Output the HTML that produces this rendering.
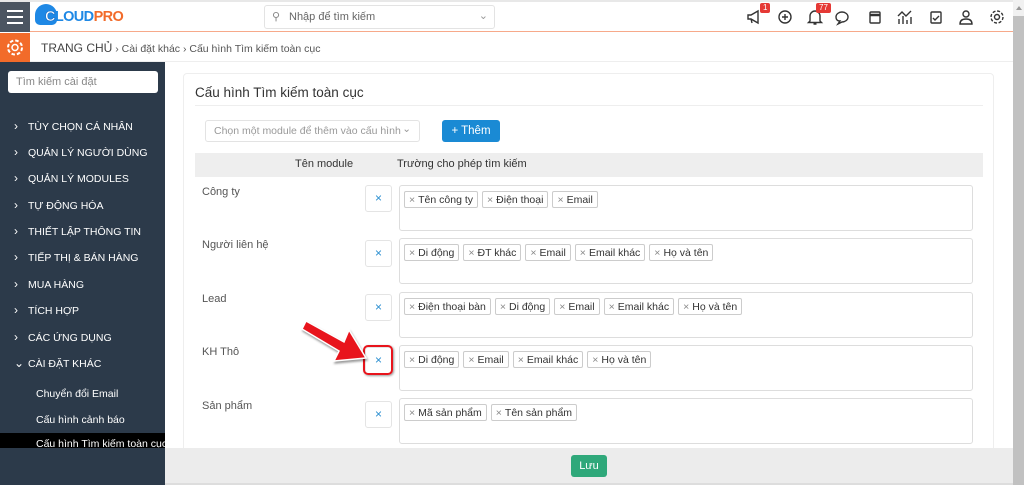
<!DOCTYPE html>
<html><head><meta charset="utf-8"><style>
*{box-sizing:border-box;margin:0;padding:0}
body{width:1024px;height:485px;overflow:hidden;background:#fff;font-family:"Liberation Sans",sans-serif;position:relative;color:#333}
.abs{position:absolute}
.top{left:0;top:0;width:1013px;height:32px;background:#fff;border-top:2px solid #e8e8e8;border-bottom:1px solid #f7a98a}
.ham{left:0;top:2px;width:30px;height:30px;background:#4b5561}
.ham i{position:absolute;left:7px;width:16px;height:2px;background:#fff}
.bc{left:0;top:33px;width:1013px;height:29px;border-bottom:1px solid #eee}
.gear{left:0;top:33px;width:30px;height:29px;background:#f26b2a}
.side{left:0;top:62px;width:165px;height:423px;background:#2c3a4a}
.sinput{left:8px;top:71px;width:150px;height:22px;background:#fff;border-radius:3px;font-size:11px;color:#888;padding:5px 8px}
.mi{left:14px;font-size:10.5px;color:#fff;text-transform:uppercase;white-space:nowrap}
.mi b{font-weight:normal;display:inline-block;width:14px;font-size:12px}
.sub{left:36px;font-size:10.5px;color:#fff}
.card{left:183px;top:73px;width:811px;height:390px;border:1px solid #eee;border-radius:4px}
.thead{left:195px;top:153px;width:788px;height:24px;background:#eee;font-size:11px;color:#333}
.lbl{left:202px;font-size:11px;color:#555}
.xb{left:365px;width:27px;height:27px;border:1px solid #e4e4e4;border-radius:3px;color:#2a8ed0;font-size:12px;text-align:center;line-height:25px}
.fb{left:399px;width:574px;height:46px;border:1px solid #ddd;border-radius:3px;padding:4px 4px}
.tag{display:inline-block;height:17px;border:1px solid #ccc;border-radius:2px;font-size:10.5px;color:#333;padding:1px 4px 0 4px;margin-right:4px;line-height:14px;white-space:nowrap}
.tag s{text-decoration:none;color:#888;margin-right:3px}
.foot{left:165px;top:448px;width:848px;height:37px;background:#ececec;border-bottom:2px solid #ddd}
.scroll{left:1013px;top:0;width:11px;height:485px;background:#f1f1f1}
</style></head><body>
<div class="abs top"></div>
<div class="abs ham"><i style="top:8px"></i><i style="top:14px"></i><i style="top:20px"></i></div>
<div class="abs" style="left:35px;top:4px;width:22px;height:21px;background:#1e88e5;border-radius:11px 11px 5px 5px"></div>
<div class="abs" style="left:45px;top:9px;font-size:14.5px;font-weight:bold;letter-spacing:-0.6px;color:#1e88e5"><span style="color:#fff;-webkit-text-stroke:0.6px #1e6fc5">C</span>LOUD<span style="color:#f26b2a">PRO</span></div>
<div class="abs" style="left:264px;top:5px;width:231px;height:24px;border:1px solid #e3e3e3;border-radius:3px;font-size:11px;color:#666;padding:5px 0 0 24px">Nhập để tìm kiếm<span style="position:absolute;right:6px;top:3px;color:#999">⌄</span><span style="position:absolute;left:7px;top:4px;color:#888">⚲</span></div>
<svg class="abs" style="left:746px;top:8px" width="260" height="18" fill="none" stroke="#333" stroke-width="1.4">
<path d="M2 7h3l7-4v12l-7-4H2z M5 11l1 4"/>
<circle cx="39" cy="9" r="6"/><path d="M36 9h6M39 6v6"/>
<path d="M64 13V8a5 5 0 0 1 10 0v5l1.5 1.5h-13z M67.5 16h3"/>
<path d="M94 13c-3 0-4-2-4-4 0-3 3-5 6-5s6 2 6 5-3 5-6 5l-4 2z"/>
<rect x="124" y="4" width="10" height="11" rx="1"/><path d="M124 7h10" stroke-width="2.5"/>
<path d="M153 16v-5M157 16v-8M161 16v-4M165 16v-7M152 8l4-4 4 4 5-5"/>
<rect x="185" y="4" width="10" height="11" rx="1"/><path d="M187 10l2 2 4-4"/>
<circle cx="220" cy="6" r="3"/><path d="M214 16c0-4 3-5 6-5s6 1 6 5z"/>
<circle cx="251" cy="9" r="2.5"/><circle cx="251" cy="9" r="6" stroke-dasharray="3 1.7"/>
</svg>
<div class="abs" style="left:760px;top:3px;background:#e53935;color:#fff;font-size:8px;padding:0 3px;border-radius:2px;line-height:10px">1</div>
<div class="abs" style="left:816px;top:3px;background:#e53935;color:#fff;font-size:8px;padding:0 3px;border-radius:2px;line-height:10px">77</div>
<div class="abs bc"></div>
<div class="abs gear"><svg width="30" height="29"><circle cx="15" cy="14.5" r="3" fill="none" stroke="#fff" stroke-width="1.5"/><circle cx="15" cy="14.5" r="7" fill="none" stroke="#fff" stroke-width="2" stroke-dasharray="3.5 2"/></svg></div>
<div class="abs" style="left:41px;top:41px;font-size:10.5px;color:#555"><span style="font-size:12px;color:#444">TRANG CHỦ</span> › Cài đặt khác › Cấu hình Tìm kiếm toàn cục</div>
<div class="abs side"></div>
<div class="abs sinput">Tìm kiếm cài đặt</div>
<div class="abs mi" style="top:119px"><b>›</b>Tùy chọn cá nhân</div>
<div class="abs mi" style="top:145px"><b>›</b>Quản lý người dùng</div>
<div class="abs mi" style="top:171px"><b>›</b>Quản lý modules</div>
<div class="abs mi" style="top:198px"><b>›</b>Tự động hóa</div>
<div class="abs mi" style="top:224px"><b>›</b>Thiết lập thông tin</div>
<div class="abs mi" style="top:250px"><b>›</b>Tiếp thị &amp; bán hàng</div>
<div class="abs mi" style="top:277px"><b>›</b>Mua hàng</div>
<div class="abs mi" style="top:303px"><b>›</b>Tích hợp</div>
<div class="abs mi" style="top:330px"><b>›</b>Các ứng dụng</div>
<div class="abs mi" style="top:356px"><b>⌄</b>Cài đặt khác</div>
<div class="abs sub" style="top:388px">Chuyển đổi Email</div>
<div class="abs sub" style="top:414px">Cấu hình cảnh báo</div>
<div class="abs" style="left:0;top:433px;width:165px;height:15px;background:#000;overflow:hidden"><div style="position:absolute;left:36px;top:5px;font-size:10.5px;color:#fff;white-space:nowrap">Cấu hình Tìm kiếm toàn cục</div></div>
<div class="abs card"></div>
<div class="abs" style="left:195px;top:85px;font-size:13.5px;color:#333">Cấu hình Tìm kiếm toàn cục</div>
<div class="abs" style="left:195px;top:105px;width:788px;height:1px;background:#eee"></div>
<div class="abs" style="left:205px;top:120px;width:215px;height:22px;border:1px solid #e3e3e3;border-radius:3px;font-size:10.5px;color:#999;padding:4px 8px;white-space:nowrap">Chọn một module để thêm vào cấu hình<span style="position:absolute;right:8px;top:2px">⌄</span></div>
<div class="abs" style="left:442px;top:120px;width:58px;height:22px;background:#1a8ad4;border-radius:3px;color:#fff;font-size:11.5px;text-align:center;line-height:22px">+ Thêm</div>
<div class="abs thead"><span style="position:absolute;left:100px;top:5px">Tên module</span><span style="position:absolute;left:202px;top:5px">Trường cho phép tìm kiếm</span></div>

<div class="abs lbl" style="top:186px">Công ty</div>
<div class="abs xb" style="top:185px">×</div>
<div class="abs fb" style="top:185px"><span class="tag"><s>×</s>Tên công ty</span><span class="tag"><s>×</s>Điện thoại</span><span class="tag"><s>×</s>Email</span></div>

<div class="abs lbl" style="top:239px">Người liên hệ</div>
<div class="abs xb" style="top:240px">×</div>
<div class="abs fb" style="top:238px"><span class="tag"><s>×</s>Di động</span><span class="tag"><s>×</s>ĐT khác</span><span class="tag"><s>×</s>Email</span><span class="tag"><s>×</s>Email khác</span><span class="tag"><s>×</s>Họ và tên</span></div>

<div class="abs lbl" style="top:293px">Lead</div>
<div class="abs xb" style="top:294px">×</div>
<div class="abs fb" style="top:292px"><span class="tag"><s>×</s>Điện thoại bàn</span><span class="tag"><s>×</s>Di động</span><span class="tag"><s>×</s>Email</span><span class="tag"><s>×</s>Email khác</span><span class="tag"><s>×</s>Họ và tên</span></div>

<div class="abs lbl" style="top:346px">KH Thô</div>
<div class="abs xb" style="top:347px">×</div>
<div class="abs fb" style="top:345px"><span class="tag"><s>×</s>Di động</span><span class="tag"><s>×</s>Email</span><span class="tag"><s>×</s>Email khác</span><span class="tag"><s>×</s>Họ và tên</span></div>

<div class="abs lbl" style="top:400px">Sản phẩm</div>
<div class="abs xb" style="top:401px">×</div>
<div class="abs fb" style="top:398px"><span class="tag"><s>×</s>Mã sản phẩm</span><span class="tag"><s>×</s>Tên sản phẩm</span></div>

<div class="abs" style="left:363px;top:345px;width:30px;height:30px;border:2.5px solid #e8141c;border-radius:5px;box-shadow:1px 1px 2px rgba(0,0,0,.4)"></div>
<svg class="abs" style="left:300px;top:314px" width="80" height="56"><path d="M6 7 L44 28 L49 16 L66 44 L34 47 L39 37 L2 15 Z" fill="#e8141c" stroke="#fff" stroke-width="1.5" style="filter:drop-shadow(1px 2px 1px rgba(0,0,0,.4))"/></svg>

<div class="abs foot"></div>
<div class="abs" style="left:571px;top:455px;width:36px;height:22px;background:#2fa87a;border-radius:3px;color:#fff;font-size:11px;text-align:center;line-height:22px">Lưu</div>
<div class="abs scroll"><div style="position:absolute;left:0;top:16px;width:11px;height:469px;background:#c1c1c1"></div><div style="position:absolute;left:3px;top:6px;border:3px solid transparent;border-bottom:4px solid #999;border-top:0"></div></div>
</body></html>
